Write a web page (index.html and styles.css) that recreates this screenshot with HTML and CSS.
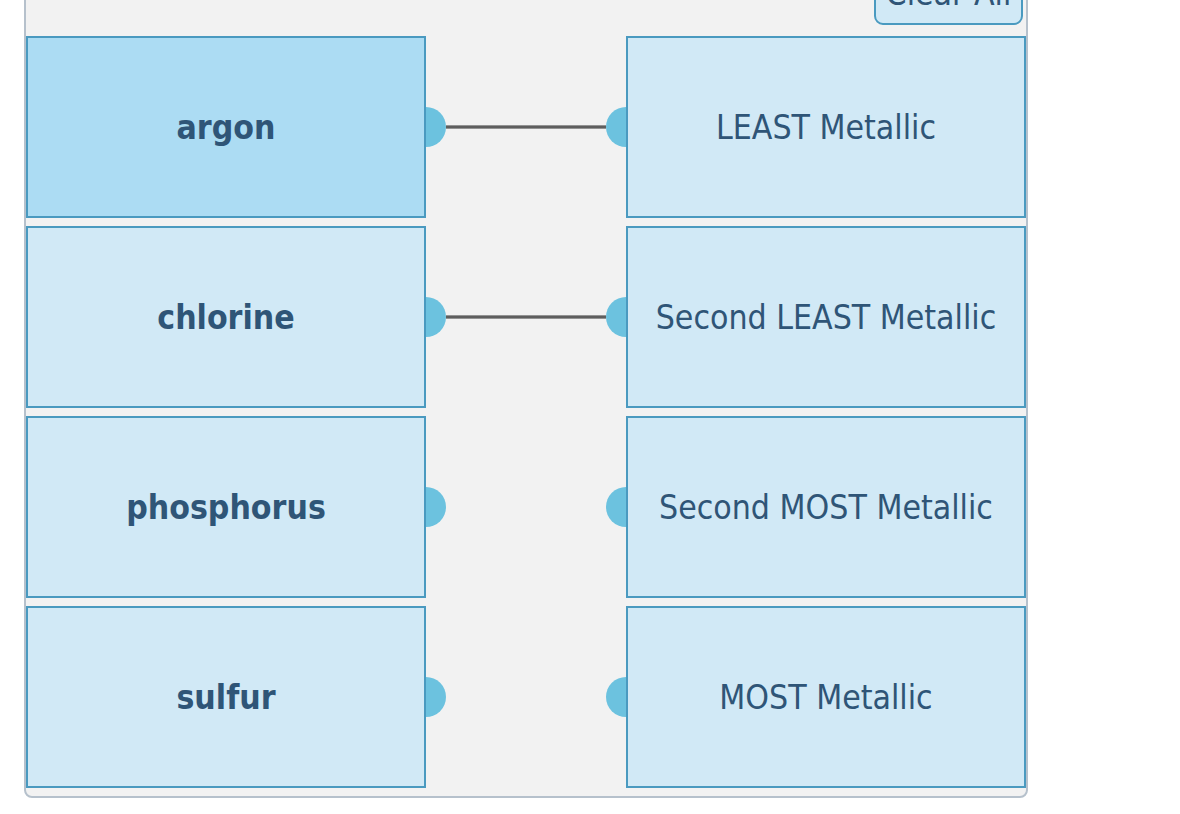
FILE: index.html
```html
<!DOCTYPE html>
<html lang="en">
<head>
<meta charset="utf-8">
<title>Matching</title>
<link rel="stylesheet" href="styles.css">
</head>
<body>
<div class="panel">
  <div class="toolbar">
    <button class="clear-btn" type="button">Clear All</button>
  </div>
  <div class="match-grid">
    <div class="item item-left item-active">argon</div>
    <div class="link is-linked"><span class="dot dot-left"></span><span class="wire"></span><span class="dot dot-right"></span></div>
    <div class="item item-right">LEAST Metallic</div>

    <div class="item item-left">chlorine</div>
    <div class="link is-linked"><span class="dot dot-left"></span><span class="wire"></span><span class="dot dot-right"></span></div>
    <div class="item item-right">Second LEAST Metallic</div>

    <div class="item item-left">phosphorus</div>
    <div class="link"><span class="dot dot-left"></span><span class="wire"></span><span class="dot dot-right"></span></div>
    <div class="item item-right">Second MOST Metallic</div>

    <div class="item item-left">sulfur</div>
    <div class="link"><span class="dot dot-left"></span><span class="wire"></span><span class="dot dot-right"></span></div>
    <div class="item item-right">MOST Metallic</div>
  </div>
</div>
</body>
</html>
```

FILE: styles.css
```css
html, body {
  margin: 0;
  padding: 0;
  background: #ffffff;
}

body {
  font-family: "DejaVu Sans Condensed", "DejaVu Sans", Verdana, sans-serif;
  color: #2f5577;
}

.panel {
  width: 1000px;
  margin: -44px 0 0 24px;
  padding: 6px 0 8px 0;
  background: #f2f2f2;
  border: 2px solid #b6c1cc;
  border-radius: 8px;
}

.toolbar {
  display: flex;
  justify-content: flex-end;
  padding-right: 3px;
  margin-bottom: 11px;
}

.clear-btn {
  font-family: inherit;
  font-size: 33.5px;
  line-height: 40px;
  color: #2f5577;
  background: #d1e9f6;
  border: 2px solid #4a9ac0;
  border-radius: 9px;
  padding: 8px 6px 9px 6px;
  width: 149px;
  white-space: nowrap;
}

.match-grid {
  display: grid;
  grid-template-columns: 400px 200px 400px;
  grid-auto-rows: 182px;
  row-gap: 8px;
}

.item {
  display: flex;
  align-items: center;
  justify-content: center;
  box-sizing: border-box;
  background: #d1e9f6;
  border: 2px solid #4a9ac0;
  font-size: 33.5px;
  position: relative;
  z-index: 1;
}

.item-left {
  font-weight: bold;
}

.item-active {
  background: #acdcf3;
}

.link {
  display: flex;
  align-items: center;
}

.dot {
  width: 20px;
  height: 40px;
  background: #6cc2df;
  flex: none;
  filter: blur(0.4px);
}

.dot-left {
  border-radius: 0 20px 20px 0;
}

.dot-right {
  border-radius: 20px 0 0 20px;
}

.wire {
  flex: 1;
  height: 4px;
}

.is-linked .wire {
  background: linear-gradient(#b0b0b0, #5e5e5e 35%, #5e5e5e 65%, #b0b0b0);
}
```
